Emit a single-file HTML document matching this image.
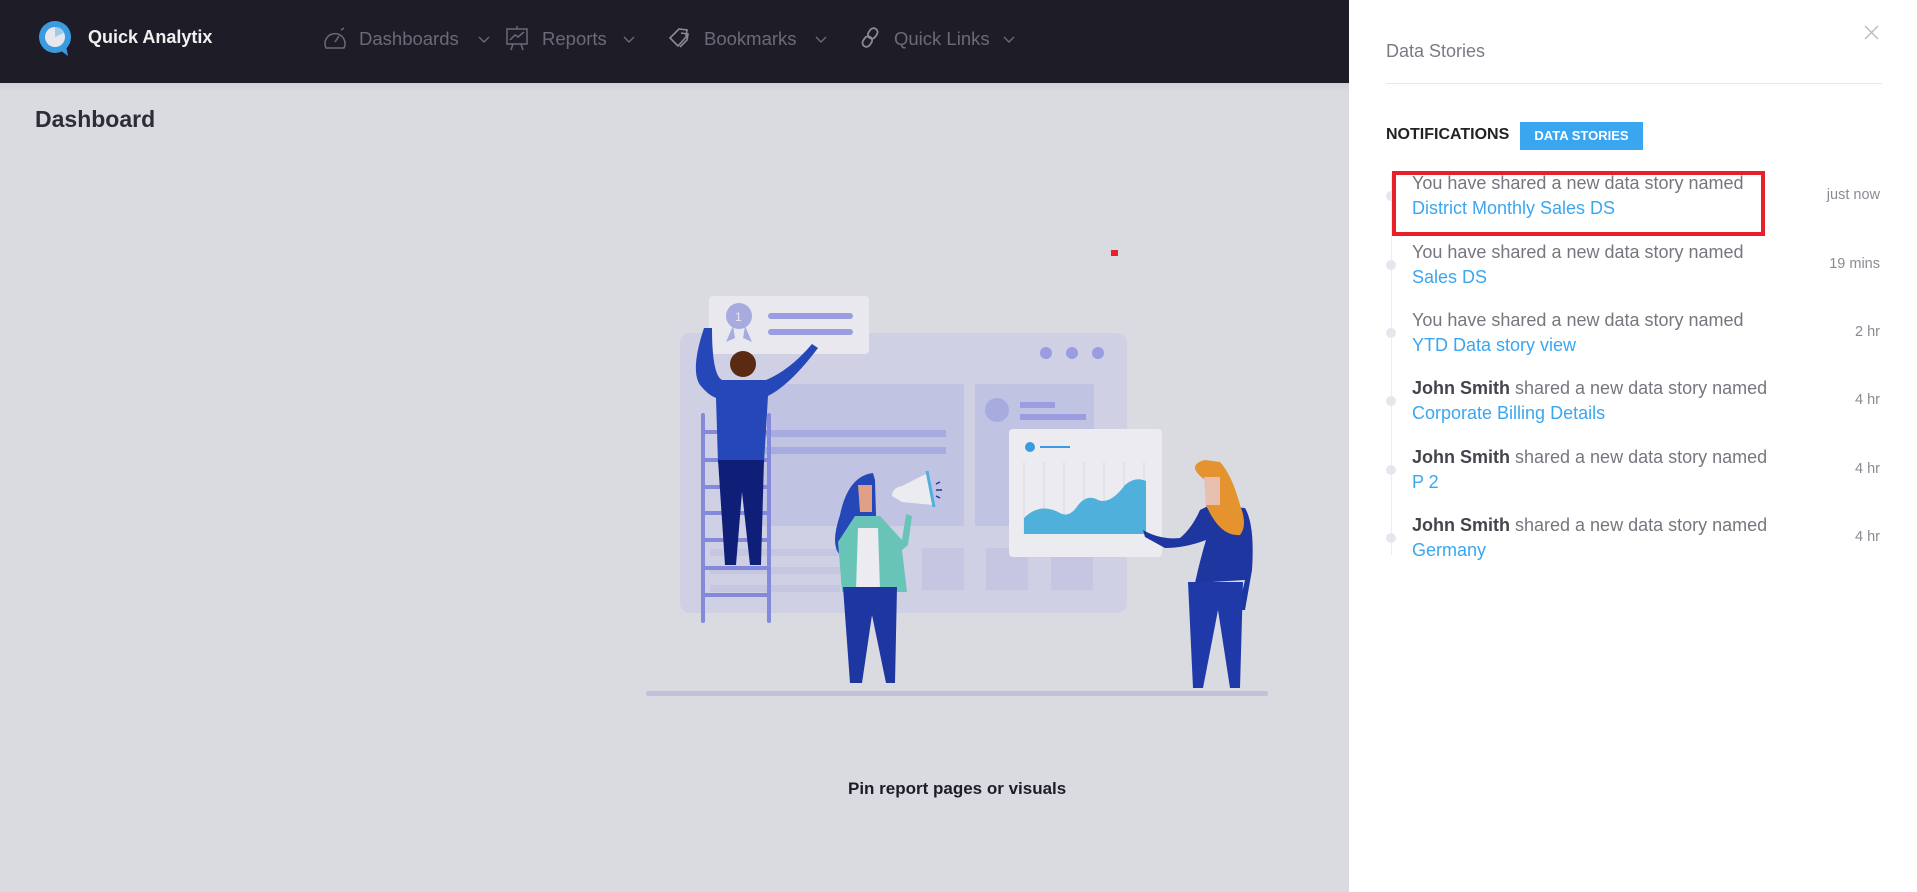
<!DOCTYPE html>
<html><head><meta charset="utf-8"><style>
*{margin:0;padding:0;box-sizing:border-box}
body{width:1917px;height:892px;overflow:hidden;background:#dadbe0;font-family:"Liberation Sans",sans-serif;position:relative}
.hdr{position:absolute;left:0;top:0;width:1349px;height:83px;background:#1e1d27}
.brand{position:absolute;left:88px;top:27px;color:#f0f0f0;font-size:18px;font-weight:bold}
.nav{position:absolute;top:28px;color:#6b6a78;font-size:18.5px}
.title{position:absolute;left:35px;top:106px;font-size:23px;color:#2d2d35;font-weight:bold}
.pin{position:absolute;left:848px;top:779px;font-size:17px;font-weight:bold;color:#1e1d27}
.panel{position:absolute;left:1349px;top:0;width:568px;height:892px;background:#fff}
.ds{position:absolute;left:37px;top:41px;font-size:18px;color:#7a7a85}
.hr{position:absolute;left:37px;right:35px;top:83px;height:1px;background:#e8e8ee}
.notif{position:absolute;left:37px;top:126px;font-size:16px;font-weight:bold;color:#222}
.badge{position:absolute;left:171px;top:122px;width:123px;height:28px;background:#3aa6f0;color:#fff;font-size:13px;font-weight:bold;text-align:center;line-height:28px}
.vline{position:absolute;left:1391px;top:175px;width:1px;height:380px;background:#ececf2}
.item{position:absolute;left:1412px;font-size:18px;line-height:25px;color:#77767f;white-space:nowrap}
.item b{color:#45444c}
.item a{color:#3aa6f0;text-decoration:none}
.dot{position:absolute;left:1386px;width:10px;height:10px;border-radius:50%;background:#e6e6ee}
.time{position:absolute;right:37px;font-size:14.5px;color:#8b8a93}
.rbox{position:absolute;left:1392px;top:171px;width:373px;height:65px;border:4px solid #e8202a}
</style></head><body>
<div class="hdr">
<svg style="position:absolute;left:38px;top:20px" width="36" height="38" viewBox="0 0 36 38"><circle cx="17" cy="17" r="16" fill="#3b9be0"/><path d="M22 30 L30 36 L28 26Z" fill="#3b9be0"/><circle cx="17" cy="17" r="10" fill="#e6e8ee"/><path d="M17 17 L17 7 A10 10 0 0 1 26 13Z" fill="#9ccbf0"/></svg>
<div class="brand">Quick Analytix</div>
<svg style="position:absolute;left:322px;top:27px" width="26" height="24" viewBox="0 0 26 24" fill="none" stroke="#6b6a78" stroke-width="1.5"><path d="M4 21 A10 10 0 1 1 22 21Z"/><path d="M13 15 L17 9"/><path d="M19 3 L22 1"/></svg>
<div class="nav" style="left:359px">Dashboards</div>
<svg style="position:absolute;left:478px;top:36px" width="12" height="8"><path d="M1 1 L6 6 L11 1" stroke="#6b6a78" fill="none" stroke-width="1.4"/></svg>
<svg style="position:absolute;left:505px;top:25px" width="24" height="26" fill="none" stroke="#6b6a78" stroke-width="1.5"><rect x="2" y="4" width="20" height="15"/><path d="M5 15 L10 10 L13 12 L19 7"/><path d="M8 19 L6 25 M16 19 L18 25 M12 1 L12 4"/></svg>
<div class="nav" style="left:542px">Reports</div>
<svg style="position:absolute;left:623px;top:36px" width="12" height="8"><path d="M1 1 L6 6 L11 1" stroke="#6b6a78" fill="none" stroke-width="1.4"/></svg>
<svg style="position:absolute;left:668px;top:27px" width="22" height="22" fill="none" stroke="#8b8a96" stroke-width="1.6"><path d="M2 11 L11 2 L19 3 L18 10 L10 19Z"/><path d="M13 6 L20 7 L19 13 L12 20"/></svg>
<div class="nav" style="left:704px">Bookmarks</div>
<svg style="position:absolute;left:815px;top:36px" width="12" height="8"><path d="M1 1 L6 6 L11 1" stroke="#6b6a78" fill="none" stroke-width="1.4"/></svg>
<svg style="position:absolute;left:860px;top:27px" width="20" height="22" fill="none" stroke="#8b8a96" stroke-width="1.8"><rect x="9" y="1" width="8" height="11" rx="4" transform="rotate(35 13 6)"/><rect x="3" y="9" width="8" height="11" rx="4" transform="rotate(35 7 15)"/></svg>
<div class="nav" style="left:894px">Quick Links</div>
<svg style="position:absolute;left:1003px;top:36px" width="12" height="8"><path d="M1 1 L6 6 L11 1" stroke="#6b6a78" fill="none" stroke-width="1.4"/></svg>
</div>
<div style="position:absolute;left:0;top:83px;width:1349px;height:8px;background:linear-gradient(#cfd0d5,#dadbe0)"></div>
<div class="title">Dashboard</div>
<div style="position:absolute;left:1111px;top:250px;width:7px;height:6px;background:#e8202a"></div>

<svg style="position:absolute;left:640px;top:280px" width="640" height="420" viewBox="0 0 640 420">
<rect x="40" y="53" width="447" height="280" rx="10" fill="#cfd0e4"/>
<rect x="122" y="104" width="202" height="142" fill="#c1c3e3"/>
<rect x="335" y="104" width="119" height="142" fill="#c1c3e3"/>
<rect x="125" y="150" width="181" height="7" fill="#a8abe0"/>
<rect x="125" y="167" width="181" height="7" fill="#a8abe0"/>
<circle cx="357" cy="130" r="12" fill="#a8abe0"/>
<rect x="380" y="122" width="35" height="6" fill="#9a9ddf"/>
<rect x="380" y="134" width="66" height="6" fill="#9a9ddf"/>
<circle cx="406" cy="73" r="6" fill="#9a9ddf"/><circle cx="432" cy="73" r="6" fill="#9a9ddf"/><circle cx="458" cy="73" r="6" fill="#9a9ddf"/>
<rect x="70" y="269" width="130" height="7" fill="#c4c6e2"/><rect x="70" y="287" width="130" height="7" fill="#c4c6e2"/><rect x="70" y="305" width="130" height="7" fill="#c4c6e2"/>
<rect x="282" y="268" width="42" height="42" fill="#c4c6e2"/><rect x="346" y="268" width="42" height="42" fill="#c4c6e2"/><rect x="411" y="268" width="42" height="42" fill="#c4c6e2"/>
<rect x="69" y="16" width="160" height="58" rx="4" fill="#e8e8ee"/>
<rect x="128" y="33" width="85" height="6" rx="3" fill="#9a9ddf"/><rect x="128" y="49" width="85" height="6" rx="3" fill="#9a9ddf"/>
<circle cx="99" cy="36" r="13" fill="#a8abe0"/><text x="95" y="41" font-size="12" fill="#e8e8ee" font-family="Liberation Sans">1</text>
<path d="M93 46 L86 62 L95 58 Z M105 46 L112 62 L103 58Z" fill="#a8abe0"/>
<rect x="61" y="133" width="4" height="210" rx="2" fill="#8589dc"/><rect x="127" y="133" width="4" height="210" rx="2" fill="#8589dc"/>
<path d="M63 152 H129 M63 180 H129 M63 207 H129 M63 233 H129 M63 260 H129 M63 288 H129 M63 315 H129" stroke="#8589dc" stroke-width="4"/>
<path d="M64 48 Q50 90 60 105 Q68 115 76 118 L78 183 L124 183 L128 116 Q150 105 178 68 L172 64 Q150 90 126 100 L82 100 Q72 95 72 48Z" fill="#2547b8"/>
<circle cx="103" cy="84" r="13" fill="#5a2a12"/>
<path d="M78 180 L124 180 L121 285 L110 285 L102 212 L96 285 L85 285Z" fill="#0f1f78"/>
<rect x="369" y="149" width="153" height="128" rx="4" fill="#ececf0"/>
<g stroke="#d8d8e4" stroke-width="1"><path d="M384 182 V254 M404 182 V254 M424 182 V254 M444 182 V254 M464 182 V254 M484 182 V254 M504 182 V254"/></g>
<circle cx="390" cy="167" r="5" fill="#3b9be0"/><rect x="400" y="166" width="30" height="2" fill="#3b9be0"/>
<path d="M384 254 L384 238 Q400 222 420 233 Q428 238 436 228 Q446 213 458 220 Q470 225 485 205 Q495 196 506 201 L506 254Z" fill="#4fb0dc"/>
<path d="M503 250 Q520 260 540 258 Q552 248 560 230 L570 225 L605 228 Q615 245 612 290 L605 330 L598 330 L605 300 L555 303 Q560 280 566 260 Q545 268 525 268 L505 257Z" fill="#1e36a0"/>
<path d="M548 302 L603 302 L600 408 L590 408 L578 330 L563 408 L553 408Z" fill="#1f3aa8"/>
<path d="M565 180 Q545 185 565 200 L566 225 Q580 257 600 255 Q608 245 600 225 Q592 195 580 182Z" fill="#e5932e"/>
<path d="M564 197 L580 197 L580 225 L566 225Z" fill="#e8c0b0"/>
<path d="M233 193 Q208 196 200 235 Q190 265 200 275 L237 270 L235 200Z" fill="#2547b8"/>
<path d="M218 205 L232 205 L232 232 L220 232Z" fill="#e0a088"/>
<path d="M198 262 L215 236 L240 236 L262 260 L266 234 L272 236 L268 265 L262 270 L267 312 L202 312Z" fill="#69c4b8"/>
<path d="M218 248 L238 248 L240 310 L216 310Z" fill="#ececf0"/>
<path d="M203 307 L257 307 L255 403 L246 403 L232 335 L222 403 L210 403Z" fill="#1e36a0"/>
<path d="M252 216 Q252 208 262 206 L288 193 L293 225 L262 222Z" fill="#ececf0"/>
<path d="M287 191 L294 227" stroke="#4fb0dc" stroke-width="3"/>
<path d="M296 204 L300 202 M296 210 L302 210 M296 216 L300 218" stroke="#1e36a0" stroke-width="1.5"/>
<rect x="6" y="411" width="622" height="5" rx="2" fill="#c0c2dc"/>
</svg>
<div class="pin">Pin report pages or visuals</div>

<div class="panel">
<div class="ds">Data Stories</div>
<svg style="position:absolute;left:515px;top:25px" width="15" height="15"><path d="M1 1 L14 14 M14 1 L1 14" stroke="#b8b8c2" stroke-width="1.3"/></svg>
<div class="hr"></div>
<div class="notif">NOTIFICATIONS</div>
<div class="badge">DATA STORIES</div>
</div>
<div class="vline"></div>

<div class="dot" style="top:191px"></div><div class="item" style="top:171px">You have shared a new data story named<br><a>District Monthly Sales DS</a></div><div class="time" style="top:187px">just now</div>
<div class="dot" style="top:260px"></div><div class="item" style="top:240px">You have shared a new data story named<br><a>Sales DS</a></div><div class="time" style="top:256px">19 mins</div>
<div class="dot" style="top:328px"></div><div class="item" style="top:308px">You have shared a new data story named<br><a>YTD Data story view</a></div><div class="time" style="top:324px">2 hr</div>
<div class="dot" style="top:396px"></div><div class="item" style="top:376px"><b>John Smith</b> shared a new data story named<br><a>Corporate Billing Details</a></div><div class="time" style="top:392px">4 hr</div>
<div class="dot" style="top:465px"></div><div class="item" style="top:445px"><b>John Smith</b> shared a new data story named<br><a>P 2</a></div><div class="time" style="top:461px">4 hr</div>
<div class="dot" style="top:533px"></div><div class="item" style="top:513px"><b>John Smith</b> shared a new data story named<br><a>Germany</a></div><div class="time" style="top:529px">4 hr</div>
<div class="rbox"></div>
</body></html>
